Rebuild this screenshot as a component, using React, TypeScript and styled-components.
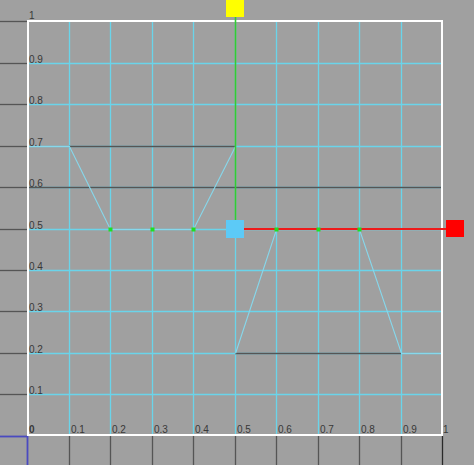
import styled, { createGlobalStyle } from 'styled-components';

const GlobalStyle = createGlobalStyle`
    html, body {
        margin: 0;
        padding: 0;
        background: #a0a0a0;
    }
`;

const Viewport = styled.div`
    width: 474px;
    height: 465px;
    overflow: hidden;
    background: #a0a0a0;
    font-family: "Liberation Sans", Arial, sans-serif;
`;

const Graph = styled.svg`
    display: block;
    width: 474px;
    height: 465px;
`;

const Label = styled.text`
    font-family: "Liberation Sans", Arial, sans-serif;
    font-size: 10px;
    fill: #383838;
`;

const Curve = styled.polyline`
    fill: none;
    stroke: #86d8ec;
    stroke-width: 1.1;
`;

// pixel positions of 0, 0.1 ... 1 on each axis
const xs = [27, 69, 110, 152, 193, 235, 276, 318, 359, 401, 442];
const ys = [435, 394, 353, 311, 270, 229, 187, 146, 104, 63, 21];

const GRID = '#6ad4ea';
const DARK = '#555555';
const W = 1.3;

const dots = [2, 3, 4, 6, 7, 8];

function App() {
    return (
        <Viewport>
            <GlobalStyle />
            <Graph viewBox="0 0 474 465">
                {/* world grid outside the frame */}
                {ys.slice(1).map((y) => (
                    <line key={'l' + y} x1={0} x2={27} y1={y + 0.5} y2={y + 0.5} stroke={DARK} strokeWidth={W} />
                ))}
                {xs.slice(1).map((x, i) => (
                    <line key={'b' + x} x1={x + 0.5} x2={x + 0.5} y1={436} y2={465}
                        stroke={i === 9 ? '#2a2a2a' : DARK} strokeWidth={W} />
                ))}
                <line x1={0} x2={28} y1={436.5} y2={436.5} stroke="#4a4ac0" strokeWidth={1.8} />
                <line x1={27.5} x2={27.5} y1={436} y2={465} stroke="#4a4ac0" strokeWidth={1.8} />

                {/* cyan grid */}
                {xs.slice(1, 10).map((x) => (
                    <line key={'gx' + x} x1={x + 0.5} x2={x + 0.5} y1={21} y2={435} stroke={GRID} strokeWidth={W} />
                ))}
                {ys.slice(1, 10).map((y) => (
                    <line key={'gy' + y} x1={27} x2={442} y1={y + 0.5} y2={y + 0.5} stroke={GRID} strokeWidth={W} />
                ))}

                {/* dark segments */}
                <line x1={69} x2={235} y1={146.5} y2={146.5} stroke={DARK} strokeWidth={W} />
                <line x1={27} x2={442} y1={187.5} y2={187.5} stroke={DARK} strokeWidth={W} />
                <line x1={235} x2={401} y1={353.5} y2={353.5} stroke={DARK} strokeWidth={W} />

                {/* curve */}
                <Curve points="27,146.5 69.5,146.5 110.5,229.5 193.5,229.5 235.5,146.5" />
                <Curve points="235.5,353.5 276.5,229.5 359.5,229.5 401.5,353.5 442,353.5" />

                {/* frame */}
                <rect x={28} y={21} width={414} height={414} fill="none" stroke="#ffffff" strokeWidth={2} />

                {/* axes handles */}
                <line x1={235.5} x2={235.5} y1={17} y2={220} stroke="#33cc33" strokeWidth={1.6} />
                <line x1={244} x2={446} y1={229} y2={229} stroke="#ee1a1a" strokeWidth={2} />
                <rect x={226} y={0} width={18} height={17} fill="#ffff00" />
                <rect x={226} y={220} width={18} height={18} fill="#5ccaf7" />
                <rect x={446} y={220} width={18} height={17} fill="#ff0000" />

                {dots.map((i) => (
                    <rect key={'d' + i} x={xs[i] - 1.5} y={227.5} width={4} height={4} fill="#22dd22" />
                ))}

                {/* labels */}
                <Label x={29} y={19}>1</Label>
                {ys.slice(1, 10).map((y, i) => (
                    <Label key={'ly' + y} x={29} y={y - 0.5}>{(0.1 * (i + 1)).toFixed(1)}</Label>
                ))}
                <Label x={29} y={433} fontWeight="bold">0</Label>
                {xs.slice(1, 10).map((x, i) => (
                    <Label key={'lx' + x} x={x + 2} y={433}>{(0.1 * (i + 1)).toFixed(1)}</Label>
                ))}
                <Label x={443} y={433}>1</Label>
            </Graph>
        </Viewport>
    );
}

export default App;
